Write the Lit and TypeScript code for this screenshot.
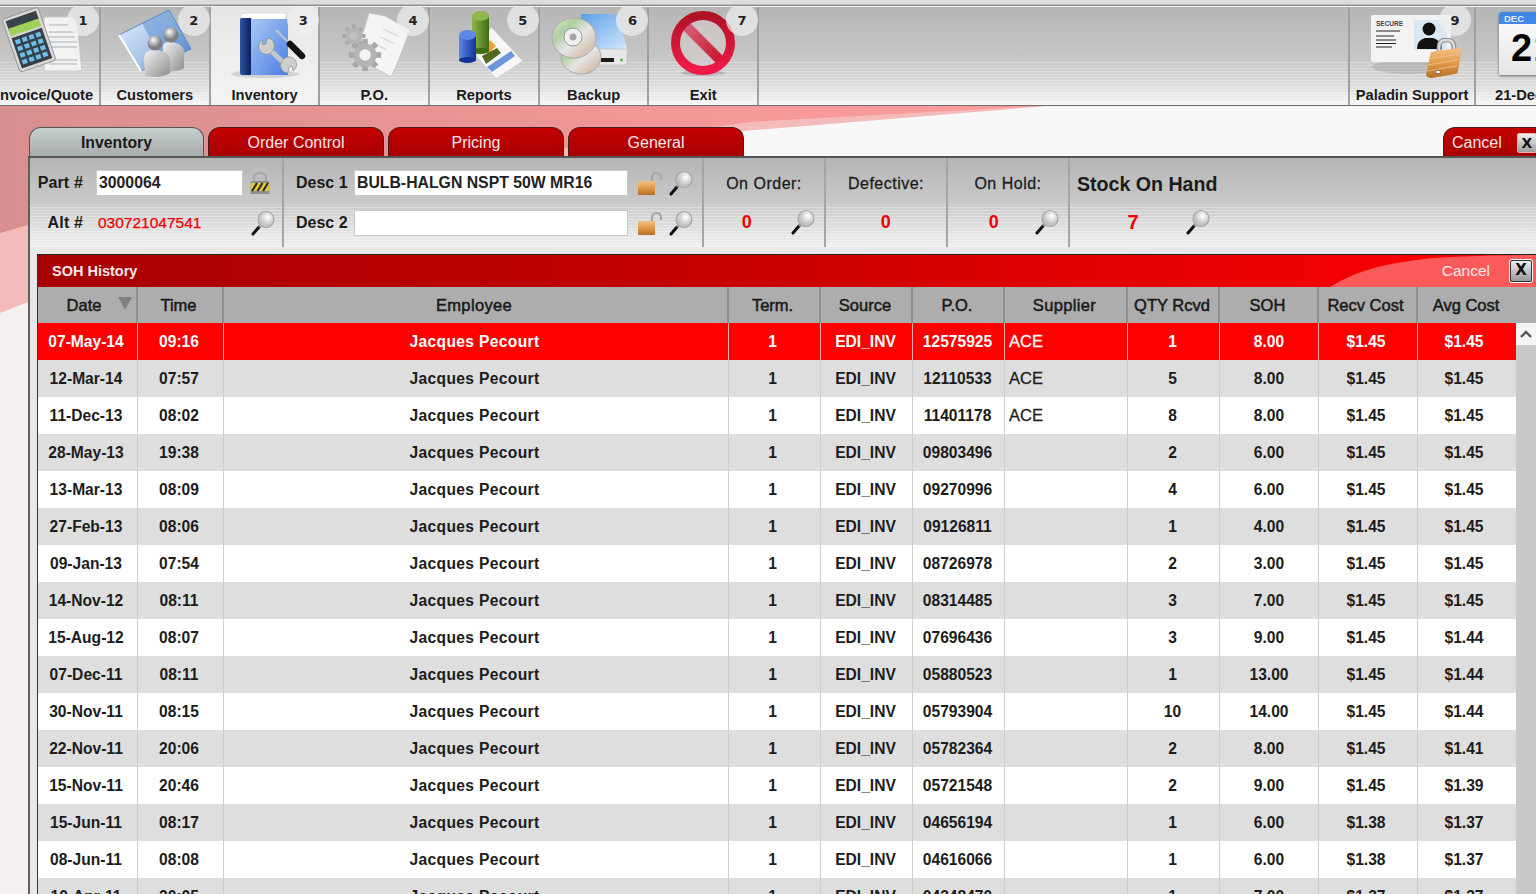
import { LitElement, html, css, svg } from "lit";
import { customElement } from "lit/decorators.js";

const ROWS = [
  ["07-May-14","09:16","12575925","ACE","1","8.00","$1.45","$1.45"],
  ["12-Mar-14","07:57","12110533","ACE","5","8.00","$1.45","$1.45"],
  ["11-Dec-13","08:02","11401178","ACE","8","8.00","$1.45","$1.45"],
  ["28-May-13","19:38","09803496","","2","6.00","$1.45","$1.45"],
  ["13-Mar-13","08:09","09270996","","4","6.00","$1.45","$1.45"],
  ["27-Feb-13","08:06","09126811","","1","4.00","$1.45","$1.45"],
  ["09-Jan-13","07:54","08726978","","2","3.00","$1.45","$1.45"],
  ["14-Nov-12","08:11","08314485","","3","7.00","$1.45","$1.45"],
  ["15-Aug-12","08:07","07696436","","3","9.00","$1.45","$1.44"],
  ["07-Dec-11","08:11","05880523","","1","13.00","$1.45","$1.44"],
  ["30-Nov-11","08:15","05793904","","10","14.00","$1.45","$1.44"],
  ["22-Nov-11","20:06","05782364","","2","8.00","$1.45","$1.41"],
  ["15-Nov-11","20:46","05721548","","2","9.00","$1.45","$1.39"],
  ["15-Jun-11","08:17","04656194","","1","6.00","$1.38","$1.37"],
  ["08-Jun-11","08:08","04616066","","1","6.00","$1.38","$1.37"],
  ["10-Apr-11","20:05","04248470","","1","7.00","$1.37","$1.37"],
];

const defs = svg`
  <defs>
    <linearGradient id="gBlue" x1="0" y1="0" x2="1" y2="1"><stop offset="0" stop-color="#a9c8f4"/><stop offset="1" stop-color="#4b7fe6"/></linearGradient>
    <linearGradient id="gCover" x1="0" y1="0" x2="1" y2="1"><stop offset="0" stop-color="#e4eefa"/><stop offset=".55" stop-color="#a9c6ea"/><stop offset="1" stop-color="#3f78c4"/></linearGradient>
    <linearGradient id="gNavy" x1="0" y1="0" x2="1" y2="0"><stop offset="0" stop-color="#31559f"/><stop offset="1" stop-color="#0a1a5c"/></linearGradient>
    <linearGradient id="gGray" x1="0" y1="0" x2="1" y2="1"><stop offset="0" stop-color="#f4f4f4"/><stop offset="1" stop-color="#8d8d8d"/></linearGradient>
    <linearGradient id="gGreen" x1="0" y1="0" x2="1" y2="0"><stop offset="0" stop-color="#8fb84a"/><stop offset="1" stop-color="#3f6b14"/></linearGradient>
    <linearGradient id="gCyl" x1="0" y1="0" x2="1" y2="0"><stop offset="0" stop-color="#5d88e6"/><stop offset="1" stop-color="#12329a"/></linearGradient>
    <linearGradient id="gDrive" x1="0" y1="0" x2="1" y2="1"><stop offset="0" stop-color="#5a9fe8"/><stop offset="1" stop-color="#d5e8fb"/></linearGradient>
    <linearGradient id="gRed" x1="0" y1="0" x2="0" y2="1"><stop offset="0" stop-color="#b01226"/><stop offset="1" stop-color="#f01a48"/></linearGradient>
    <linearGradient id="gBar" x1="0" y1="0" x2="1" y2="1"><stop offset="0" stop-color="#d86078"/><stop offset="1" stop-color="#c8142e"/></linearGradient>
    <linearGradient id="gOrange" x1="0" y1="0" x2="0" y2="1"><stop offset="0" stop-color="#f2c084"/><stop offset="0.5" stop-color="#e09a48"/><stop offset="1" stop-color="#b96f22"/></linearGradient>
    <linearGradient id="gDisc" x1="0" y1="0" x2="1" y2="1"><stop offset="0" stop-color="#dfe6d8"/><stop offset=".3" stop-color="#aed0a0"/><stop offset=".55" stop-color="#e6e6e6"/><stop offset=".8" stop-color="#d8c4b4"/><stop offset="1" stop-color="#b9cfe0"/></linearGradient>
    <radialGradient id="gGlass" cx="0.6" cy="0.35"><stop offset="0" stop-color="#ffffff"/><stop offset="1" stop-color="#c2c2c2"/></radialGradient>
    <radialGradient id="gHead" cx="0.4" cy="0.3"><stop offset="0" stop-color="#fafafa"/><stop offset="1" stop-color="#7e7e7e"/></radialGradient>
  </defs>`;

const gear = (cx: number, cy: number, r: number) => {
  const teeth = [];
  for (let i = 0; i < 8; i++) {
    teeth.push(svg`<rect x="${cx - r * 0.2}" y="${cy - r * 1.15}" width="${r * 0.4}" height="${r * 0.5}" fill="#a8a8a8" transform="rotate(${i * 45} ${cx} ${cy})"/>`);
  }
  return svg`${teeth}<circle cx="${cx}" cy="${cy}" r="${r * 0.62}" fill="none" stroke="#b4b4b4" stroke-width="${r * 0.42}"/>`;
};

const icons: Record<string, unknown> = {
  invoice: svg`
    <path d="M43 18 H72 L76 24 L81 72 H43 Z" fill="#f2f2f2" stroke="#c8c8c8"/>
    <path d="M48 26H68M48 33H74M48 38H74M48 43H76M48 48H76M48 61H76M48 65H76" stroke="#aab0b5"/>
    <g transform="rotate(-19 27 41)">
      <rect x="9" y="13" width="38" height="56" rx="3" fill="#d8d8d8" stroke="#999"/>
      <rect x="12" y="16" width="32" height="10" fill="#39434a"/>
      <rect x="12" y="24" width="32" height="8" fill="#9fd05a"/>
      <rect x="12" y="34" width="32" height="32" fill="#37404a"/>
      ${[0,1,2,3].flatMap(r=>[0,1,2,3].map(c=>svg`<rect x="${14.5+c*7.2}" y="${37+r*7}" width="5" height="4.5" fill="#6ec0ea"/>`))}
    </g>`,
  customers: svg`
    <path d="M118 36 L168 11 L190 50 L140 72 Z" fill="url(#gCover)" stroke="#3f78c4" stroke-width=".8"/>
    <path d="M141 24 L168 11 L190 50 L162 63 Z" fill="#5b8fd0" opacity=".55"/>
    <path d="M118 36 L140 72" fill="none" stroke="#fff" stroke-width="2"/>
    <path d="M162 48 q0 -5 6 -5 q12 0 15 8 l0 18 q-7 5 -21 3 Z" fill="url(#gGray)"/>
    <circle cx="170" cy="36" r="7.5" fill="url(#gHead)"/>
    <path d="M143 60 q0 -9 10 -9 q15 0 16 10 l0 13 q-10 6 -25 3 Z" fill="url(#gGray)"/>
    <circle cx="154" cy="44" r="7.5" fill="url(#gHead)"/>`,
  inventory: svg`
    <ellipse cx="264" cy="75" rx="34" ry="4" fill="#000" opacity=".12"/>
    <path d="M239 20 q0 -6 6 -6 H285 V22 H250 Z" fill="#fff" stroke="#d8d8d8"/>
    <rect x="239" y="19" width="12" height="57" rx="2" fill="url(#gNavy)"/>
    <rect x="250" y="20" width="37" height="56" fill="url(#gBlue)"/>
    <path d="M275 31 L292 48" stroke="#c5c5c5" stroke-width="2"/>
    <path d="M289 45 L301 57" stroke="#111" stroke-width="6.5" stroke-linecap="round"/>
    <path d="M268 50 L285 66" stroke="#c6c6c6" stroke-width="5"/>
    <path d="M261 41 a7.5 7.5 0 0 0 9 13 l2 -3 a7.5 7.5 0 0 0 -6 -12 l-1 6 l-3 1 Z" fill="#cfcfcf" stroke="#8b8b8b" stroke-width=".7"/>
    <path d="M292 72 a7.5 7.5 0 0 0 -8 -13 l-3 3 a7.5 7.5 0 0 0 6 12 l1 -6 l3 -1 Z" fill="#cfcfcf" stroke="#8b8b8b" stroke-width=".7"/>`,
  po: svg`
    <path d="M368 14 L384 17 L409 31 L395 68 L390 78 L372 68 L354 60 Z" fill="#f4f4f4" stroke="#c5c5c5"/>
    <path d="M382 30l15 7M379 38l15 7M376 46l10 5" stroke="#d2d2d2"/>
    ${gear(353, 37, 10)}${gear(364, 56, 14)}`,
  reports: svg`
    <path d="M490 28 L522 62 L495 80 L475 57 Z" fill="#f7f7f7" stroke="#ccc"/>
    <path d="M489 41 L495 47 L487 55 L482 50 Z" fill="#e9a53c"/>
    <path d="M481 57 L496 49 L500 54 L485 65 Z" fill="#4f6b1e"/>
    <path d="M486 68 L510 52 L514 57 L491 73 Z" fill="#6e96dc"/>
    <rect x="471" y="16" width="17" height="36" fill="url(#gGreen)"/>
    <ellipse cx="479.5" cy="52" rx="8.5" ry="3" fill="#3f6b14"/>
    <ellipse cx="479.5" cy="17" rx="8.5" ry="5" fill="#8fb84a"/>
    <rect x="458" y="36" width="17" height="25" fill="url(#gCyl)"/>
    <ellipse cx="466.5" cy="61" rx="8.5" ry="3" fill="#12329a"/>
    <ellipse cx="466.5" cy="36" rx="8.5" ry="5" fill="#5d88e6"/>`,
  backup: svg`
    <path d="M579 15 H616 L625 50 H579 Z" fill="url(#gDrive)"/>
    <path d="M579 50 H625 V64 q0 2 -2 2 H585 q-3 0 -6 -4 Z" fill="#e7e7e7" stroke="#bdbdbd" stroke-width=".6"/>
    <rect x="599" y="59" width="13" height="4" fill="#1b1b1b"/>
    <circle cx="619.5" cy="61" r="1.6" fill="#5fc04f"/>
    <ellipse cx="579" cy="58" rx="20" ry="17" fill="url(#gDisc)" stroke="#aaa"/>
    <ellipse cx="572" cy="39" rx="22" ry="20" fill="url(#gDisc)" stroke="#aaa"/>
    <circle cx="571" cy="38" r="9" fill="#f0f0f0" stroke="#999"/>
    <circle cx="571" cy="38" r="3.5" fill="#a5a5a5"/>`,
  exit: svg`
    <ellipse cx="702" cy="74" rx="22" ry="3" fill="#000" opacity=".14"/>
    <circle cx="702" cy="44" r="27.5" fill="#d5c9cb" opacity=".6"/>
    <path d="M684 26 L720 62" stroke="url(#gBar)" stroke-width="10"/>
    <circle cx="702" cy="44" r="27.5" fill="none" stroke="url(#gRed)" stroke-width="9"/>`,
  support: svg`
    <ellipse cx="1408" cy="68" rx="36" ry="7" fill="#000" opacity=".1"/>
    <rect x="1371" y="16" width="80" height="47" rx="2" fill="#f3f3f3"/>
    <text x="1376" y="27" font-family="Liberation Sans" font-size="6.5" font-weight="700" fill="#444">SECURE</text>
    <path d="M1376 32H1400M1376 37H1394M1376 41H1396M1376 44.5H1396M1376 48H1392" stroke="#222" stroke-width="1.2"/>
    <rect x="1414" y="21" width="33" height="30" fill="#d9e8f5"/>
    <circle cx="1429" cy="30" r="6.5" fill="#111"/>
    <path d="M1417 50 q0 -9 8 -11 h8 q8 2 9 11 Z" fill="#111"/>
    <path d="M1439 56 v-8 q0 -7 7.5 -7 q7.5 0 7.5 7 v8" fill="none" stroke="#8e8e8e" stroke-width="4.6"/>
    <path d="M1439 56 v-8 q0 -7 7.5 -7 q7.5 0 7.5 7 v8" fill="none" stroke="#dcdcdc" stroke-width="2.4"/>
    <path d="M1431 53 L1457 49 q4 -1 4 4 L1458 72 q0 3 -3 3 L1432 79 q-6 0 -6 -4 Z" fill="url(#gOrange)"/>
    <path d="M1429 60 L1459 55 M1428 66 L1458 61 M1427 72 L1457 67" stroke="#f6cf9c" stroke-width="1" opacity=".7"/>
    <ellipse cx="1438" cy="73" rx="2.6" ry="1.7" fill="#fff" stroke="#333" stroke-width=".6"/>`,
};

const magnifier = html`<svg class="mini" viewBox="0 0 26 26" aria-hidden="true">
  <path d="M3 24 L9 17" stroke="#111" stroke-width="3" stroke-linecap="round"/>
  <path d="M9 17 L11 15" stroke="#999" stroke-width="2"/>
  <circle cx="16" cy="9.5" r="8" fill="url(#gGlass)" stroke="#a6a6a6" stroke-width="1.2"/>
</svg>`;

const openLock = html`<svg class="mini" viewBox="0 0 26 26" aria-hidden="true">
  <path d="M15 13 V8 q0 -5 4.5 -5 q4.5 0 4.5 5 v2" fill="none" stroke="#a8a8a8" stroke-width="2.2"/>
  <rect x="1" y="11" width="17" height="14" rx="1" fill="url(#gOrange)"/>
</svg>`;

const hazardLock = html`<svg class="mini" viewBox="0 0 26 26" aria-hidden="true">
  <path d="M7 12 V8 q0 -5 6 -5 q6 0 6 5 v4" fill="none" stroke="#a9a9a9" stroke-width="2.2"/>
  <rect x="3.5" y="11" width="19" height="13" rx="1.5" fill="#8f8f8f"/>
  <rect x="3.5" y="13" width="19" height="8" fill="#e2c93c"/>
  <path d="M5 21 L10 13 M10.5 21 L15.5 13 M16 21 L21 13" stroke="#2c2c2c" stroke-width="2.2"/>
</svg>`;

const TOOLS = [
  { n: "1", label: "Invoice/Quote", icon: "invoice", cx: 44, cls: "first" },
  { n: "2", label: "Customers", icon: "customers", cx: 154, cls: "" },
  { n: "3", label: "Inventory", icon: "inventory", cx: 264, cls: "active" },
  { n: "4", label: "P.O.", icon: "po", cx: 373, cls: "" },
  { n: "5", label: "Reports", icon: "reports", cx: 483, cls: "" },
  { n: "6", label: "Backup", icon: "backup", cx: 592, cls: "" },
  { n: "7", label: "Exit", icon: "exit", cx: 702, cls: "" },
];

@customElement("app-root")
export class AppRoot extends LitElement {
  static styles = css`
    :host { display: block; width: 1536px; height: 894px; overflow: hidden; position: relative;
      font-family: "Liberation Sans", Arial, sans-serif; color: #1b1b1b; background: #f8f8f8; }
    .art { position: absolute; left: 0; top: 0; width: 1536px; height: 894px; }
    .defs { position: absolute; width: 0; height: 0; }
    .page { position: relative; display: flex; flex-direction: column; height: 894px; }

    .strip { height: 5px; background: #dcdcdc; border-bottom: 1px solid #8b8b8b; box-shadow: inset 0 -1px #bbb; }
    .toolbar { display: flex; border-top: 1px solid #f0f0f0; border-bottom: 1px solid #6d6d6d; box-sizing: border-box; height: 100px; overflow: hidden;
      background:
        repeating-linear-gradient(0deg, rgba(255,255,255,.3) 0 1px, transparent 1px 3px) bottom / 100% 45% no-repeat,
        linear-gradient(#b6b6b6 0%, #c8c8c8 55%, #dcdcdc 80%, #f6f6f6 100%); }
    .tool { position: relative; flex: 0 0 109.7px; min-width: 0; box-sizing: border-box; border-right: 2px solid #a0a0a0; display: flex; flex-direction: column; align-items: center; }
    .tool.first { flex-basis: 111px; margin-left: -10px; }
    .tool.active { background: linear-gradient(#e6e6e6, #f4f4f4); }
    .tool .ic { width: 100px; height: 72px; display: block; flex: none; overflow: visible; }
    .tool .lb { font-weight: 700; font-size: 14.7px; line-height: 18px; margin-top: 7px; white-space: nowrap; }
    .tool.wide { flex: 0 0 128px; border-left: 2px solid #a0a0a0; }
    .tool.wide .badge { right: 3px; }
    .tool.cal { flex: 0 0 60px; border-right: 0; align-items: flex-start; }
    .tool.cal .lb { margin-left: 19px; }
    .grow { flex: 1; }
    .badge { position: absolute; top: -3px; right: -1px; width: 32px; height: 32px; border-radius: 50%;
      background: rgba(238,238,238,.72); display: flex; align-items: center; justify-content: center;
      font: 700 13px "DejaVu Sans", sans-serif; color: #222; }
    .tool.first .badge { right: 0; }
    .cal-box { position: relative; width: 100px; height: 72px; display: flex; padding-left: 23px; box-sizing: border-box; flex: none; }
    .cal-page { margin-top: 5px; width: 77px; height: 63px; background: linear-gradient(#fff, #e4e4e4); border-radius: 2px; box-shadow: 0 1px 3px #666; overflow: hidden; }
    .cal-mon { height: 12px; line-height: 13px; background: #3f88e6; color: #dfeeff; font-size: 9.5px; font-weight: 700; padding-left: 5px; }
    .cal-day { font-size: 38px; line-height: 48px; font-weight: 700; color: #000; padding-left: 12px; letter-spacing: 1px; }

    .tabs { display: flex; margin-top: 21px; height: 29px; padding-left: 29px; gap: 4px; box-sizing: border-box; }
    .tab { width: 176px; box-sizing: border-box; border: 1px solid #4b1a1a; border-bottom: 0; border-radius: 12px 12px 0 0; padding-top: 1px;
      background: linear-gradient(#c40000, #a80000); color: #ffe6e6; display: flex; align-items: center; justify-content: center; font-size: 16px; }
    .tab.on { background: linear-gradient(#c6d0cd, #a8acac); color: #1b1b1b; font-weight: 700; font-size: 15.8px; border-color: #555; width: 175px; }
    .tab.cancel { margin-left: auto; width: 93px; justify-content: flex-start; padding-left: 8px; gap: 15px; border-radius: 12px 0 0 0; }
    .x { width: 20px; height: 20px; box-sizing: border-box; background: linear-gradient(#eee, #9d9d9d); border: 1px solid #f4b0b0; color: #111; font: 700 14px "DejaVu Sans", sans-serif; line-height: 18px; text-align: center; border-radius: 2px; flex: none; }

    .panel { flex: 1; margin-left: 28px; border-left: 2px solid #5e5e5e; border-top: 2px solid #555; background: #e8e8e8; display: flex; flex-direction: column; min-height: 0; }
    .form { height: 89px; flex: none; display: flex; background:
        repeating-linear-gradient(0deg, rgba(255,255,255,.3) 0 1px, transparent 1px 3px) bottom / 100% 45% no-repeat,
        linear-gradient(#b5b5b5 0%, #c9c9c9 50%, #e4e4e4 85%, #f0f0f0 100%); }
    .sec { box-sizing: border-box; border-right: 2px solid #a6a6a6; flex: none; font-size: 16px; font-weight: 700; }
    .mini { width: 26px; height: 26px; display: block; }
    .idgrid { width: 254px; display: grid; grid-template-columns: 53px 147px 26px; column-gap: 13px; grid-template-rows: 26px 26px; row-gap: 14px; padding-top: 12px; align-items: center; letter-spacing: .15px; }
    .idgrid > :nth-child(3n) { margin-left: -9px; }
    .idgrid > :nth-child(6) { margin-left: -6px; }
    .r { text-align: right; }
    input { box-sizing: border-box; width: 100%; height: 26px; border: 1px solid #c9c9c9; background: #fff; font: 700 15.8px "Liberation Sans", sans-serif; padding: 0 2px; color: #222; outline: none; }
    .alt { font-weight: 400; color: #ee0000; padding-left: 2px; font-size: 15.5px; letter-spacing: 0; -webkit-text-stroke: .25px #ee0000; }
    .descgrid { width: 420px; display: grid; grid-template-columns: 58px 274px 26px 26px; grid-template-rows: 26px 26px; row-gap: 14px; padding: 12px 0 0 12px; align-items: center; }
    .descgrid .l1 { margin-left: 9px; }
    .descgrid .l2 { margin-left: 14px; }
    .stat { width: 122px; padding-top: 14px; text-align: center; font-weight: 400; letter-spacing: .5px; }
    .stat .t { height: 24px; line-height: 24px; -webkit-text-stroke: .3px #222; }
    .stat .v { margin-top: 13px; height: 26px; display: grid; grid-template-columns: 86px 26px; align-items: center; }
    .stat.mid .v { display: block; line-height: 26px; }
    .num { color: #ee0000; font-weight: 700; font-size: 18px; }
    .stock { flex: 1; padding: 14px 0 0 7px; font-weight: 700; border-right: 0; }
    .stock .t { font-size: 19.6px; line-height: 24px; }
    .stock .v { margin-top: 13px; display: grid; grid-template-columns: 108px 26px; height: 26px; align-items: center; }
    .stock .num { text-align: center; font-size: 20px; padding-left: 4px; }
    .gap { height: 7px; flex: none; background: #e9e9e9; }

    .box { margin-left: 7px; border-top: 1px solid #222; border-left: 1px solid #333; position: relative; flex: 1; min-height: 0; overflow: hidden; background: #fff; }
    .title { height: 32px; display: flex; align-items: center; padding-left: 14px; position: relative; overflow: hidden;
      background: linear-gradient(90deg, #a80000 0%, #c00000 40%, #dd0000 66%, #f00000 85%, #ff0000 100%); color: #ffeaea; font-weight: 700; font-size: 14.5px; }
    .curve { position: absolute; right: 0; top: 0; width: 206px; height: 32px; }
    .title .act { position: relative; margin-left: auto; display: flex; align-items: center; color: #ffe9e9; font-weight: 400; font-size: 15.5px; gap: 20px; padding-right: 4px; }
    .title .x { width: 22px; height: 22px; border: 1px solid #333; box-shadow: 0 0 0 1px #f5f5f5; background: linear-gradient(#eee, #999); font-size: 15px; line-height: 19px; }

    .hdr, .row { display: grid; grid-template-columns: 100px 86px 505px 92px 92px 92px 123px 92px 99px 99px 98px; }
    .hdr { height: 36px; background: #adadad; }
    .hdr > div { border-right: 2px solid #8e8e8e; display: flex; align-items: center; justify-content: center; font-size: 16.5px; color: #1a1a1a; font-weight: 400; -webkit-text-stroke: .5px #1a1a1a; position: relative; padding-right: 3px; }
    .hdr > div:last-child { border-right: 0; padding-right: 6px; }
    .hdr > div:nth-child(3), .hdr > div:nth-child(7) { letter-spacing: .35px; }
    .hdr > div:nth-child(n+5) { padding-right: 2px; }
    .hdr > div:nth-child(10) { padding-right: 4px; }
    .tri { position: absolute; right: 4px; top: 10px; width: 0; height: 0; border-left: 7px solid transparent; border-right: 7px solid transparent; border-top: 13px solid #808080; }
    .hdr .dt { padding-right: 6px; }
    .body { display: flex; }
    .rows { width: 1478px; flex: none; }
    .row { height: 37px; font-weight: 700; font-size: 15.6px; color: #1c1c1c; background: #fff; }
    .row:nth-child(even) { background: #dedede; }
    .row.sel { background: #ff0000; color: #fff; }
    .row > div { display: flex; align-items: center; justify-content: center; border-right: 1px solid #cfcfcf; white-space: nowrap; padding-right: 3px; }
    .row > div:nth-child(3) { letter-spacing: .35px; }
    .row > div:nth-child(4) { padding-right: 4px; }
    .row > div:nth-child(n+5) { padding-right: 2px; }
    .row > div:nth-child(9) { padding-right: 0; }
    .row > div:nth-child(10) { padding-right: 4px; }
    .row.sel > div { border-right-color: #ffb0b0; }
    .row > div:last-child { border-right: 0; padding-right: 6px; }
    .row > div.s { justify-content: flex-start; padding-left: 4px; font-weight: 400; -webkit-text-stroke: .3px currentColor; font-size: 16.5px; }
    .scroll { flex: 1; background: #c9c9c9; }
    .scroll .up { height: 22px; background: #f4f4f4; display: flex; align-items: center; justify-content: center; }
  `;

  private icon(name: string, cx: number) {
    return html`<svg class="ic" viewBox="${cx - 50} 8 100 72" aria-hidden="true">${icons[name]}</svg>`;
  }

  render() {
    return html`
      <svg class="defs" aria-hidden="true">${defs}</svg>
      <svg class="art" viewBox="0 0 1536 894" aria-hidden="true">
        <defs><linearGradient id="gPink" gradientUnits="userSpaceOnUse" x1="0" x2="1060" y1="0" y2="0"><stop offset="0" stop-color="#d98f8f"/><stop offset=".45" stop-color="#ea9494"/><stop offset=".75" stop-color="#f89a9a"/><stop offset="1" stop-color="#fb9c9c"/></linearGradient></defs>
        <path d="M0 105 H1060 L743 131 L0 313 Z" fill="#f5baba"/>
        <path d="M0 105 H1060 L750 122 L28 225 L0 233 Z" fill="url(#gPink)" />
        <path d="M0 313 L28 302 V894 H0 Z" fill="#f6efef"/>
      </svg>
      <div class="page">
        <div class="strip"></div>
        <div class="toolbar">
          ${TOOLS.map(t => html`
            <div class="tool ${t.cls}">
              ${this.icon(t.icon, t.cx)}
              <div class="lb">${t.label}</div>
              <div class="badge">${t.n}</div>
            </div>`)}
          <div class="grow"></div>
          <div class="tool wide">
            ${this.icon("support", 1412)}
            <div class="lb">Paladin Support</div>
            <div class="badge">9</div>
          </div>
          <div class="tool cal">
            <div class="cal-box"><div class="cal-page"><div class="cal-mon">DEC</div><div class="cal-day">21</div></div></div>
            <div class="lb">21-Dec</div>
          </div>
        </div>

        <div class="tabs">
          <div class="tab on">Inventory</div>
          <div class="tab">Order Control</div>
          <div class="tab">Pricing</div>
          <div class="tab">General</div>
          <div class="tab cancel">Cancel <span class="x">X</span></div>
        </div>

        <div class="panel">
          <div class="form">
            <div class="sec idgrid">
              <div class="r">Part #</div><input value="3000064" readonly /><div>${hazardLock}</div>
              <div class="r">Alt #</div><div class="alt">030721047541</div><div>${magnifier}</div>
            </div>
            <div class="sec descgrid">
              <div>Desc 1</div><input value="BULB-HALGN NSPT 50W MR16" readonly /><div class="l1">${openLock}</div><div class="l2">${magnifier}</div>
              <div>Desc 2</div><input value="" readonly /><div class="l1">${openLock}</div><div class="l2">${magnifier}</div>
            </div>
            <div class="sec stat"><div class="t">On Order:</div><div class="v"><div class="num">0</div>${magnifier}</div></div>
            <div class="sec stat mid"><div class="t">Defective:</div><div class="v"><div class="num">0</div></div></div>
            <div class="sec stat"><div class="t">On Hold:</div><div class="v"><div class="num" style="padding-left:6px">0</div>${magnifier}</div></div>
            <div class="sec stock"><div class="t">Stock On Hand</div><div class="v"><div class="num">7</div>${magnifier}</div></div>
          </div>
          <div class="gap"></div>
          <div class="box">
            <div class="title">
              <svg class="curve" viewBox="0 0 206 32" preserveAspectRatio="none" aria-hidden="true"><path d="M0 32 Q40 6 120 2 Q170 0 206 0 V32 Z" fill="#fb5a5a"/></svg>
              SOH History
              <div class="act">Cancel <span class="x">X</span></div>
            </div>
            <div class="hdr">
              <div class="dt">Date<span class="tri"></span></div><div>Time</div><div>Employee</div><div>Term.</div><div>Source</div><div>P.O.</div><div>Supplier</div><div>QTY Rcvd</div><div>SOH</div><div>Recv Cost</div><div>Avg Cost</div>
            </div>
            <div class="body">
              <div class="rows">
                ${ROWS.map((r, i) => html`
                  <div class="row ${i === 0 ? "sel" : ""}">
                    <div>${r[0]}</div><div>${r[1]}</div><div>Jacques Pecourt</div><div>1</div><div class="src">EDI_INV</div><div>${r[2]}</div><div class="s">${r[3]}</div><div>${r[4]}</div><div>${r[5]}</div><div>${r[6]}</div><div>${r[7]}</div>
                  </div>`)}
              </div>
              <div class="scroll"><div class="up"><svg width="12" height="8" viewBox="0 0 12 8" aria-hidden="true"><path d="M1 7 L6 2 L11 7" fill="none" stroke="#555" stroke-width="2.4"/></svg></div></div>
            </div>
          </div>
        </div>
      </div>`;
  }
}
